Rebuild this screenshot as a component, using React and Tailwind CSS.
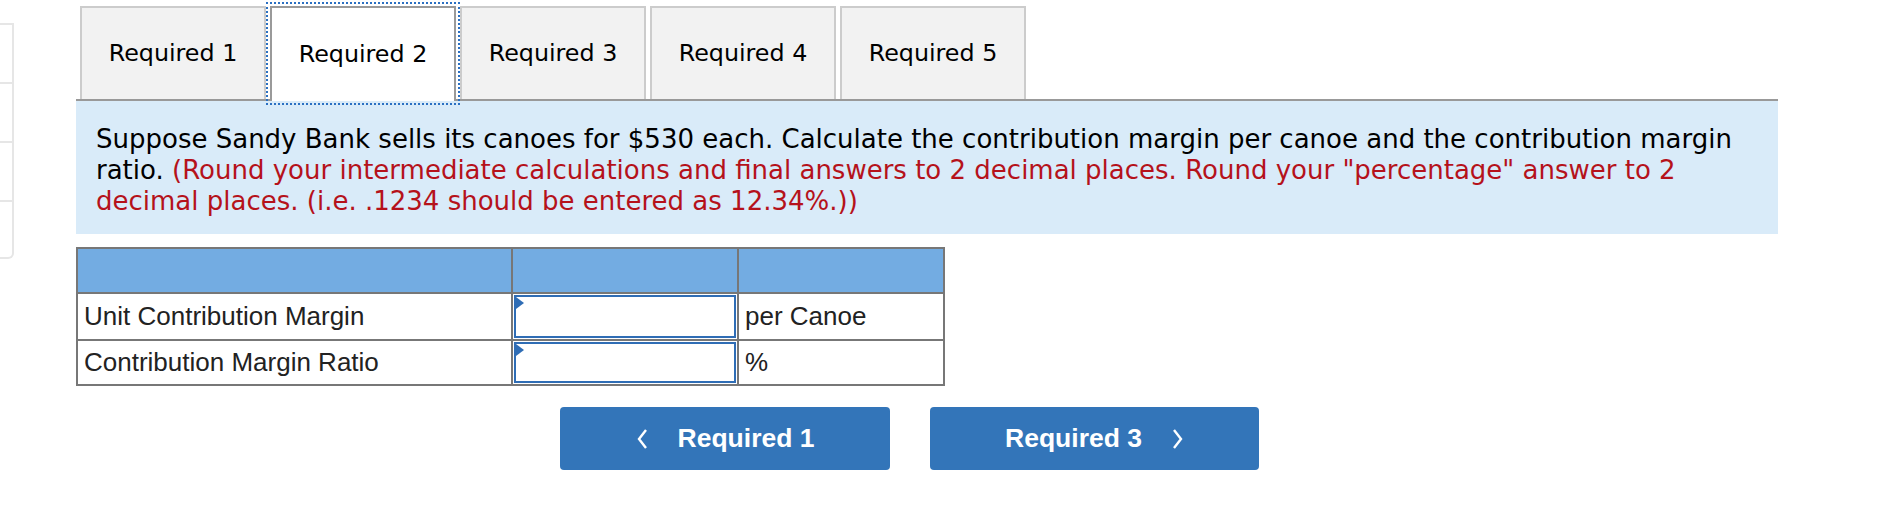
import React from "react";

const tabs = ["Required 1", "Required 2", "Required 3", "Required 4", "Required 5"];

function Chevron({ dir }) {
    return (
        <svg width="12" height="22" viewBox="0 0 12 22" fill="none">
            <polyline
                points={dir === "left" ? "10,2 3,11 10,20" : "2,2 9,11 2,20"}
                stroke="white"
                strokeWidth="2.4"
                strokeLinejoin="miter"
            />
        </svg>
    );
}

function AnswerInput() {
    return (
        <div className="relative h-full border-2 border-[#2f6db5] bg-white">
            <div className="absolute left-0 top-0 h-0 w-0 border-y-[6px] border-l-[8px] border-y-transparent border-l-[#2f6db5]" />
        </div>
    );
}

export default function App() {
    return (
        <div className="flex min-h-[516px] w-[1878px] bg-white">
            {/* Side list, mostly off screen */}
            <div className="mt-[23px] h-[236px] w-[14px] rounded-br-md border-y-2 border-r-2 border-[#e6e6e6] flex flex-col">
                <div className="h-[59px] border-b-2 border-[#e6e6e6]" />
                <div className="h-[59px] border-b-2 border-[#e6e6e6]" />
                <div className="h-[59px] border-b-2 border-[#e6e6e6]" />
                <div className="flex-1" />
            </div>

            <div className="ml-[62px] w-[1702px]">
                {/* Tabs */}
                <div className="flex gap-[4px] pl-[4px] pt-[6px] border-b-2 border-[#999999] font-['DejaVu_Sans',sans-serif] text-[23.8px] text-black">
                    {tabs.map((t, i) => (
                        <div
                            key={t}
                            className={
                                i === 1
                                    ? "relative -mb-[2px] flex h-[95px] w-[186px] items-center justify-center border-2 border-b-0 border-[#9a9a9a] bg-white outline-[2.5px] outline-dotted outline-offset-2 outline-[#2b70c2]"
                                    : "flex h-[93px] w-[186px] items-center justify-center border-2 border-b-0 border-[#cccccc] bg-[#f2f2f2]"
                            }
                        >
                            {t}
                        </div>
                    ))}
                </div>

                {/* Question */}
                <div className="bg-[#d9ebf9] px-[20px] pt-[23px] pb-[17px] font-['DejaVu_Sans',sans-serif] text-[26px] leading-[31px] text-black">
                    Suppose Sandy Bank sells its canoes for $530 each. Calculate the contribution margin per canoe and the contribution margin
                    <br />
                    ratio.{" "}
                    <span className="text-[#b5121b]">
                        (Round your intermediate calculations and final answers to 2 decimal places. Round your "percentage" answer to 2
                        <br />
                        decimal places. (i.e. .1234 should be entered as 12.34%.))
                    </span>
                </div>

                {/* Answer table */}
                <div className="mt-[13px] w-[869px] border-2 border-[#777777] font-['Liberation_Sans',Arial,sans-serif] text-[26px] text-[#222222]">
                    <div className="grid h-[43px] grid-cols-[435px_226px_1fr] bg-[#73ace2]">
                        <div className="border-r-2 border-[#777777]" />
                        <div className="border-r-2 border-[#777777]" />
                        <div />
                    </div>
                    <div className="grid h-[47px] grid-cols-[435px_226px_1fr] border-t-2 border-[#777777]">
                        <div className="flex items-center border-r-2 border-[#777777] pl-[6px]">Unit Contribution Margin</div>
                        <div className="border-r-2 border-[#777777] p-[1px]">
                            <AnswerInput />
                        </div>
                        <div className="flex items-center pl-[6px]">per Canoe</div>
                    </div>
                    <div className="grid h-[45px] grid-cols-[435px_226px_1fr] border-t-2 border-[#777777]">
                        <div className="flex items-center border-r-2 border-[#777777] pl-[6px]">Contribution Margin Ratio</div>
                        <div className="border-r-2 border-[#777777] p-[1px]">
                            <AnswerInput />
                        </div>
                        <div className="flex items-center pl-[6px]">%</div>
                    </div>
                </div>

                {/* Navigation */}
                <div className="mt-[21px] flex gap-[40px] pl-[484px] font-['Liberation_Sans',Arial,sans-serif] text-[26.5px] font-bold text-white">
                    <button className="flex h-[63px] w-[330px] items-center justify-center gap-[30px] rounded-[4px] bg-[#3375b9]">
                        <Chevron dir="left" />
                        <span>Required 1</span>
                    </button>
                    <button className="flex h-[63px] w-[329px] items-center justify-center gap-[30px] rounded-[4px] bg-[#3375b9]">
                        <span>Required 3</span>
                        <Chevron dir="right" />
                    </button>
                </div>
            </div>
        </div>
    );
}
